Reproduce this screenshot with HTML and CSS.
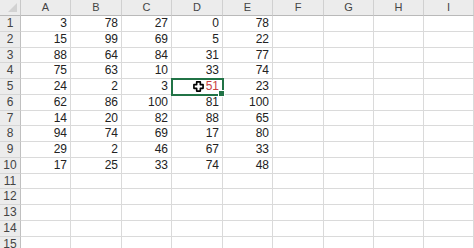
FILE: index.html
```html
<!DOCTYPE html>
<html>
<head>
    <title>Sheet</title>
    <link rel="stylesheet" href="styles.css">
</head>
<body>
    <div class="sheet" id="sheet"></div>
    <script>
        const data = [
            [3, 78, 27, 0, 78],
            [15, 99, 69, 5, 22],
            [88, 64, 84, 31, 77],
            [75, 63, 10, 33, 74],
            [24, 2, 3, 51, 23],
            [62, 86, 100, 81, 100],
            [14, 20, 82, 88, 65],
            [94, 74, 69, 17, 80],
            [29, 2, 46, 67, 33],
            [17, 25, 33, 74, 48]
        ];
        const cols = ["A", "B", "C", "D", "E", "F", "G", "H", "I"];
        let html = '<div class="corner"><span class="tri"></span></div>';
        cols.forEach(c => html += `<div class="colhead">${c}</div>`);
        for (let r = 0; r < 15; r++) {
            html += `<div class="rowhead">${r + 1}</div>`;
            for (let c = 0; c < cols.length; c++) {
                let v = data[r] && data[r][c] !== undefined ? data[r][c] : "";
                let cls = "cell";
                if (r === 4 && c === 3) cls += " active";
                html += `<div class="${cls}">${v}</div>`;
            }
        }
        document.getElementById("sheet").innerHTML = html;
        let active = document.querySelector(".active");
        active.innerHTML = `<svg class="cursor" width="11" height="11" viewBox="0 0 12 12">
            <path d="M4 1h4v3h3v4h-3v3h-4v-3h-3v-4h3z" fill="#fff" stroke="#000" stroke-width="1.8" stroke-linejoin="round"/>
        </svg><span class="val">51</span><span class="handle"></span>`;
    </script>
</body>
</html>
```
FILE: styles.css
```css
body {
    margin: 0;
    background: #ffffff;
    font-family: "Liberation Sans", Arial, sans-serif;
    font-size: 12px;
    color: #222;
    overflow: hidden;
}
.sheet {
    display: grid;
    grid-template-columns: 21px 50px 51px 50px 51px 50px 51px 50px 50px 50px;
    grid-template-rows: 16px repeat(15, 15.75px);
    width: 474px;
}
.corner {
    position: relative;
    background: #ececec;
    border-right: 1px solid #c8c8c8;
    border-bottom: 1px solid #b9b9b9;
}
.tri {
    position: absolute;
    right: 3px;
    bottom: 3px;
    width: 0;
    height: 0;
    border-left: 9px solid transparent;
    border-bottom: 9px solid #d2d2d2;
}
.colhead {
    background: #ececec;
    border-right: 1px solid #d0d0d0;
    border-bottom: 1px solid #b9b9b9;
    color: #444;
    text-align: center;
    font-size: 11px;
    line-height: 15px;
}
.rowhead {
    background: #ececec;
    border-right: 1px solid #c0c0c0;
    border-bottom: 1px solid #d6d6d6;
    color: #444;
    text-align: center;
    line-height: 15px;
}
.cell {
    border-right: 1px solid #dadada;
    border-bottom: 1px solid #dadada;
    text-align: right;
    padding-right: 3px;
    line-height: 15px;
    overflow: hidden;
    white-space: nowrap;
}
.cell.active {
    position: relative;
    overflow: visible;
    outline: 2px solid #217346;
    outline-offset: -1px;
    z-index: 2;
}
.val {
    color: #c8413f;
}
.cursor {
    position: absolute;
    left: 21px;
    top: 2px;
}
.handle {
    position: absolute;
    right: -3px;
    bottom: -3px;
    width: 5px;
    height: 5px;
    background: #217346;
    border: 1px solid #fff;
}
```
